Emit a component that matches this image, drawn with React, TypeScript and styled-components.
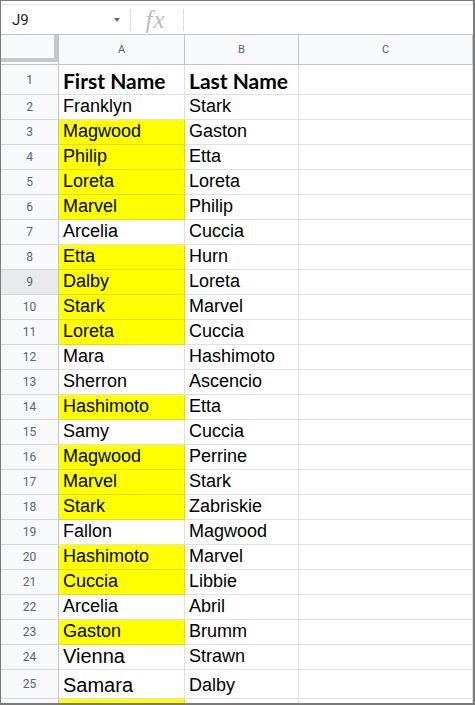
import React from "react";
import styled, { createGlobalStyle } from "styled-components";

type RowData = {
  first: string;
  last: string;
  fill?: boolean;
  big?: boolean;
};

const rows: RowData[] = [
  { first: "Franklyn", last: "Stark" },
  { first: "Magwood", last: "Gaston", fill: true },
  { first: "Philip", last: "Etta", fill: true },
  { first: "Loreta", last: "Loreta", fill: true },
  { first: "Marvel", last: "Philip", fill: true },
  { first: "Arcelia", last: "Cuccia" },
  { first: "Etta", last: "Hurn", fill: true },
  { first: "Dalby", last: "Loreta", fill: true },
  { first: "Stark", last: "Marvel", fill: true },
  { first: "Loreta", last: "Cuccia", fill: true },
  { first: "Mara", last: "Hashimoto" },
  { first: "Sherron", last: "Ascencio" },
  { first: "Hashimoto", last: "Etta", fill: true },
  { first: "Samy", last: "Cuccia" },
  { first: "Magwood", last: "Perrine", fill: true },
  { first: "Marvel", last: "Stark", fill: true },
  { first: "Stark", last: "Zabriskie", fill: true },
  { first: "Fallon", last: "Magwood" },
  { first: "Hashimoto", last: "Marvel", fill: true },
  { first: "Cuccia", last: "Libbie", fill: true },
  { first: "Arcelia", last: "Abril" },
  { first: "Gaston", last: "Brumm", fill: true },
  { first: "Vienna", last: "Strawn", big: true },
  { first: "Samara", last: "Dalby", big: true },
];

const SELECTED_ROW = 9;

const GlobalStyle = createGlobalStyle`
  html, body {
    margin: 0;
    padding: 0;
    background: #ffffff;
    overflow: hidden;
  }
  * {
    box-sizing: border-box;
  }
`;

const Frame = styled.div`
  width: 475px;
  height: 705px;
  border-style: solid;
  border-color: #7b7b7b;
  border-width: 1px 2px 2px 1px;
  overflow: hidden;
  display: flex;
  flex-direction: column;
  background: #ffffff;
  font-family: "Liberation Sans", Arial, sans-serif;
`;

const FormulaBar = styled.div`
  margin-top: 3px;
  height: 31px;
  flex: none;
  display: flex;
  align-items: center;
  border-top: 1px solid #e3e3e3;
  border-bottom: 1px solid #c4c4c4;
`;

const NameBox = styled.div`
  width: 129px;
  height: 100%;
  display: flex;
  align-items: center;
  justify-content: space-between;
  padding: 0 10px 0 11px;
  font-family: Roboto, "Liberation Sans", sans-serif;
  font-size: 15px;
  color: #1f1f1f;
`;

const Caret = styled.span`
  width: 0;
  height: 0;
  border-left: 3px solid transparent;
  border-right: 3px solid transparent;
  border-top: 4px solid #6a6a6a;
  margin-top: 1px;
`;

const Divider = styled.span`
  width: 1px;
  height: 22px;
  background: #dadce0;
`;

const FxBox = styled.div`
  width: 52px;
  display: flex;
  justify-content: center;
  font-family: "Liberation Serif", "DejaVu Serif", serif;
  font-style: italic;
  font-size: 25px;
  line-height: 1;
  color: #bdbdbd;
  letter-spacing: 1px;
  padding-right: 3px;
`;

const Sheet = styled.div`
  flex: 1;
  display: grid;
  grid-template-columns: 58px 126px 114px 1fr;
  grid-auto-rows: 25px;
  align-content: start;
`;

const Corner = styled.div`
  height: 30px;
  background:
    linear-gradient(#c7c7c7, #c7c7c7) 0 23px / 57px 4px no-repeat,
    linear-gradient(#c7c7c7, #c7c7c7) 53px 0 / 4px 27px no-repeat,
    #f8f9fa;
  border-right: 1px solid #c4c4c4;
  border-bottom: 1px solid #c4c4c4;
`;

const ColHead = styled.div`
  height: 30px;
  display: flex;
  align-items: center;
  justify-content: center;
  background: #f8f9fa;
  border-right: 1px solid #c4c4c4;
  border-bottom: 1px solid #c4c4c4;
  font-family: Roboto, "Liberation Sans", sans-serif;
  font-size: 11px;
  color: #5f6368;
`;

const RowHead = styled.div<{ $selected?: boolean; $h: number }>`
  height: ${(p) => p.$h}px;
  display: flex;
  align-items: center;
  justify-content: center;
  background: ${(p) => (p.$selected ? "#e8eaed" : "#f8f9fa")};
  border-right: 1px solid #c4c4c4;
  border-bottom: 1px solid #d6d6d6;
  font-family: Roboto, "Liberation Sans", sans-serif;
  font-size: 12px;
  color: #5f6368;
`;

const Cell = styled.div<{ $fill?: boolean; $h: number; $size: number; $bold?: boolean }>`
  height: ${(p) => p.$h}px;
  display: flex;
  align-items: flex-end;
  padding: 0 0 2px 4px;
  overflow: hidden;
  white-space: nowrap;
  background: ${(p) => (p.$fill ? "#ffff00" : "#ffffff")};
  border-right: 1px solid rgba(0, 0, 0, 0.12);
  border-bottom: 1px solid rgba(0, 0, 0, 0.12);
  font-family: ${(p) => (p.$bold ? `Lato, "Open Sans", sans-serif` : `"Liberation Sans", Arial, sans-serif`)};
  font-weight: ${(p) => (p.$bold ? 700 : 400)};
  font-size: ${(p) => p.$size}px;
  line-height: 1.1;
  color: #000000;
`;

const rowHeight = (n: number) => {
  if (n === 1) return 30;
  if (n === 25) return 29;
  return 25;
};

export default function App() {
  const heights = [30, 30, ...rows.map((_, i) => rowHeight(i + 2)), 25];
  return (
    <>
      <GlobalStyle />
      <Frame>
        <FormulaBar>
          <NameBox>
            J9
            <Caret />
          </NameBox>
          <Divider />
          <FxBox>fx</FxBox>
          <Divider />
        </FormulaBar>
        <Sheet style={{ gridTemplateRows: heights.map((h) => h + "px").join(" ") }}>
          <Corner />
          <ColHead>A</ColHead>
          <ColHead>B</ColHead>
          <ColHead>C</ColHead>

          <RowHead $h={30}>1</RowHead>
          <Cell $h={30} $size={21} $bold>First Name</Cell>
          <Cell $h={30} $size={21} $bold>Last Name</Cell>
          <Cell $h={30} $size={18} />

          {rows.map((r, i) => {
            const n = i + 2;
            const h = rowHeight(n);
            return (
              <React.Fragment key={n}>
                <RowHead $h={h} $selected={n === SELECTED_ROW}>{n}</RowHead>
                <Cell $h={h} $size={r.big ? 20 : 18} $fill={r.fill}>{r.first}</Cell>
                <Cell $h={h} $size={18}>{r.last}</Cell>
                <Cell $h={h} $size={18} />
              </React.Fragment>
            );
          })}

          {/* row 26, only its top edge shows */}
          <RowHead $h={25} />
          <Cell $h={25} $size={18} $fill />
          <Cell $h={25} $size={18} />
          <Cell $h={25} $size={18} />
        </Sheet>
      </Frame>
    </>
  );
}
